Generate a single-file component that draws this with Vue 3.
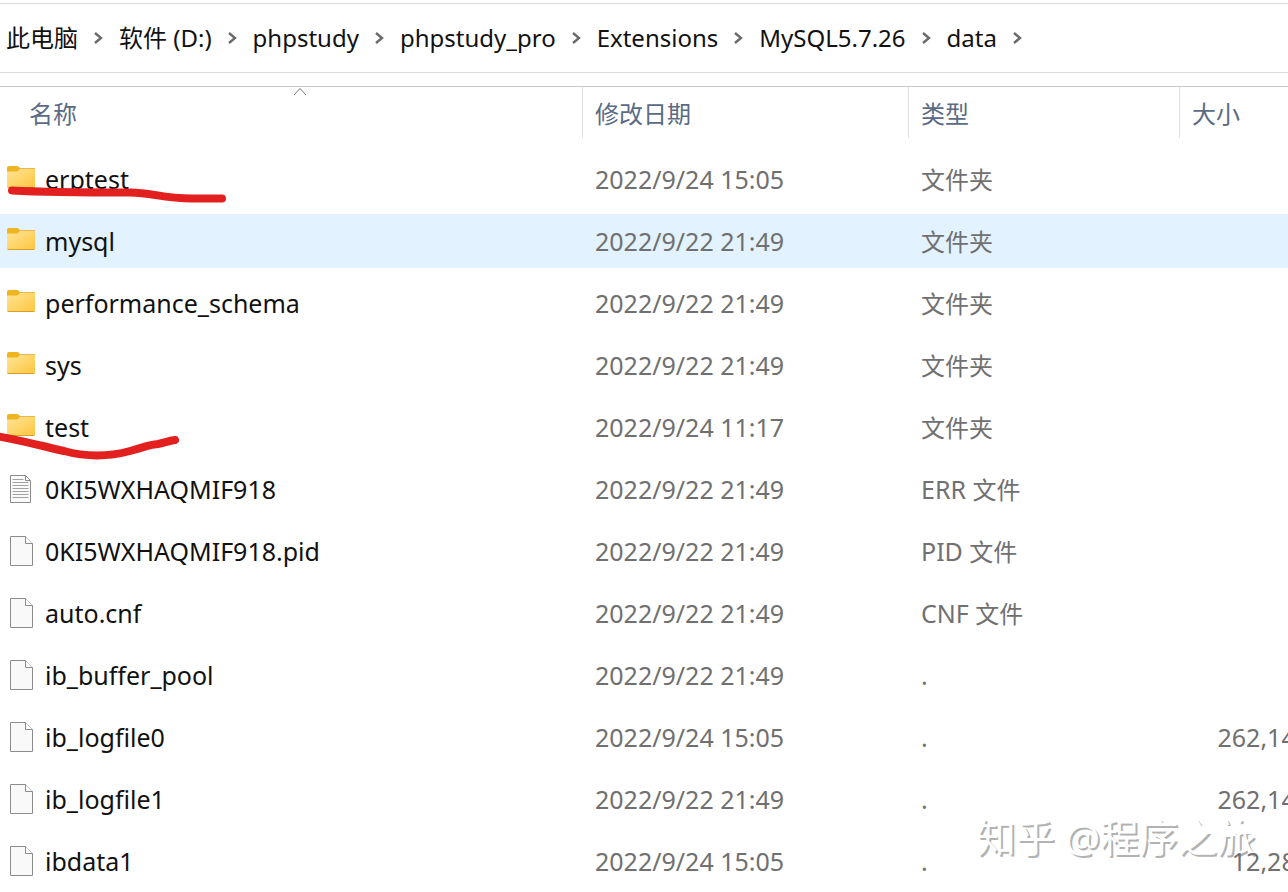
<template>
  <div class="explorer">
    <nav class="address" aria-label="路径">
      <template v-for="part in path" :key="part">
        <a href="#" @click.prevent>{{ part }}</a>
        <svg class="chevron" viewBox="0 0 11 14" aria-hidden="true">
          <path d="M2 2l6 5-6 5" />
        </svg>
      </template>
    </nav>

    <div class="list">
      <table>
        <colgroup>
          <col />
          <col class="col-date" />
          <col class="col-type" />
          <col class="col-size" />
        </colgroup>
        <thead>
          <tr>
            <th class="th-name">
              <svg class="sort" viewBox="0 0 14 9" aria-hidden="true">
                <path d="M1 8 7 1.5 13 8" />
              </svg>
              <button type="button">名称</button>
            </th>
            <th><button type="button">修改日期</button></th>
            <th><button type="button">类型</button></th>
            <th><button type="button">大小</button></th>
          </tr>
        </thead>
        <tbody>
          <tr v-for="file in files" :key="file.name" :class="{ hover: file.name === active }">
            <td class="name">
              <div class="name-cell">
                <svg v-if="file.icon === 'folder'" class="icon" viewBox="0 0 30 34">
                  <defs>
                    <linearGradient id="folder" x1="0" y1="0" x2="1" y2="1">
                      <stop offset="0" stop-color="#ffe598" />
                      <stop offset="1" stop-color="#fcc63f" />
                    </linearGradient>
                  </defs>
                  <path d="M1 6q0-2 2-2h8q1 0 2 1l2 2-3 6H1z" fill="#efb521" />
                  <path d="M1 9.500h9.500q1.500 0 2.500-1.500l1.500-1.500H29V24.500q0 1-1 1H2q-1 0-1-1z" fill="url(#folder)" />
                  <path d="M14 6.500h15" stroke="#e8b84a" />
                  <path d="M1.500 25.500h27" stroke="#d9a028" />
                </svg>
                <svg v-else-if="file.icon === 'text'" class="icon" viewBox="0 0 30 34">
                  <path d="M4.500 3.500h15l5 5v22h-20z" fill="#fafafa" stroke="#8c8c8c" />
                  <path d="M19.500 3.500v5h5" fill="none" stroke="#8c8c8c" />
                  <path d="M6.500 7.500h11M6.500 10.500h16M6.500 13.500h16M6.500 16.500h16M6.500 19.500h16M6.500 22.500h16M6.500 25.500h16" stroke="#a2a2a2" />
                </svg>
                <svg v-else class="icon" viewBox="0 0 30 34">
                  <path d="M4.500 2.500h15l7 7v22h-22z" fill="#f9f9f9" stroke="#8c8c8c" />
                  <path d="M19.500 2.500v7h7" fill="#fff" stroke="#8c8c8c" />
                </svg>
                <span>{{ file.name }}</span>
              </div>
            </td>
            <td>{{ file.date }}</td>
            <td>{{ file.type[0] }}<span class="cjk">{{ file.type[1] }}</span></td>
            <td class="size">{{ file.size }}</td>
          </tr>
        </tbody>
      </table>
    </div>

    <svg class="marks" viewBox="0 0 240 300" aria-hidden="true">
      <path d="M12 30.500C40 32 80 32.500 130 32.500c22 0 32 6 62 6h30" />
      <path d="M-4 276C20 280 42 286 64 291c22 6 44 6 66 0 22-6 18-6 28-7 6-1 10-3 17-4" />
    </svg>
    <div class="watermark">知乎 @程序之旅</div>
  </div>
</template>

<script setup>
const path = ['此电脑', '软件 (D:)', 'phpstudy', 'phpstudy_pro', 'Extensions', 'MySQL5.7.26', 'data']

const active = 'mysql'

const files = [
  { name: 'erptest', icon: 'folder', date: '2022/9/24 15:05', type: ['', '文件夹'] },
  { name: 'mysql', icon: 'folder', date: '2022/9/22 21:49', type: ['', '文件夹'] },
  { name: 'performance_schema', icon: 'folder', date: '2022/9/22 21:49', type: ['', '文件夹'] },
  { name: 'sys', icon: 'folder', date: '2022/9/22 21:49', type: ['', '文件夹'] },
  { name: 'test', icon: 'folder', date: '2022/9/24 11:17', type: ['', '文件夹'] },
  { name: '0KI5WXHAQMIF918', icon: 'text', date: '2022/9/22 21:49', type: ['ERR ', '文件'] },
  { name: '0KI5WXHAQMIF918.pid', icon: 'file', date: '2022/9/22 21:49', type: ['PID ', '文件'] },
  { name: 'auto.cnf', icon: 'file', date: '2022/9/22 21:49', type: ['CNF ', '文件'] },
  { name: 'ib_buffer_pool', icon: 'file', date: '2022/9/22 21:49', type: ['.', ''] },
  { name: 'ib_logfile0', icon: 'file', date: '2022/9/24 15:05', type: ['.', ''], size: '262,144' },
  { name: 'ib_logfile1', icon: 'file', date: '2022/9/22 21:49', type: ['.', ''], size: '262,144' },
  { name: 'ibdata1', icon: 'file', date: '2022/9/24 15:05', type: ['.', ''], size: '12,288' }
]
</script>

<style>
body {
  margin: 0;
  background: #fff;
}
</style>

<style scoped>
.explorer {
  position: relative;
  height: 100vh;
  padding-top: 3px;
  box-sizing: border-box;
  overflow: hidden;
  font-family: 'Noto Sans', 'Noto Sans CJK SC', sans-serif;
  font-size: 25px;
  line-height: 32px;
  color: #111;
}

.address {
  display: flex;
  align-items: center;
  gap: 15px;
  height: 68px;
  padding-left: 6px;
  border-top: 1px solid #dcdcdc;
  border-bottom: 1px solid #dcdcdc;
  font-size: 24px;
  white-space: nowrap;
}

.address a {
  color: inherit;
  text-decoration: none;
}

.chevron {
  width: 11px;
  height: 14px;
  flex-shrink: 0;
  fill: none;
  stroke: #6a6a6a;
  stroke-width: 2.4;
}

.list {
  margin-top: 13px;
  border-top: 1px solid #c8c8c8;
}

table {
  width: calc(100% + 45px);
  table-layout: fixed;
  border-spacing: 0;
}

.col-date {
  width: 326px;
}

.col-type {
  width: 271px;
}

.col-size {
  width: 153px;
}

th {
  position: relative;
  height: 51px;
  padding: 2px 0 0 12px;
  border-right: 1px solid #e2e2e2;
  box-sizing: border-box;
  text-align: left;
}

.th-name {
  padding-left: 29px;
}

th button {
  padding: 0;
  border: 0;
  background: none;
  font: inherit;
  font-weight: 400;
  font-size: 24px;
  color: #596b85;
}

.sort {
  position: absolute;
  top: 0;
  left: calc(50% + 2px);
  width: 14px;
  height: 9px;
  fill: none;
  stroke: #777;
}

tbody::before {
  content: '';
  display: block;
  height: 10px;
}

td {
  height: 54px;
  padding: 0 0 0 12px;
  border-top: 4px solid #fff;
  border-bottom: 4px solid #fff;
  color: #707070;
  white-space: nowrap;
}

.hover td {
  background: #e3f2ff;
}

td.name {
  padding-left: 6px;
  color: #111;
}

.name-cell {
  display: flex;
  align-items: center;
  gap: 9px;
}

.icon {
  width: 30px;
  height: 34px;
  flex-shrink: 0;
}

.cjk {
  font-size: 24px;
}

/* sizes stay readable above the watermark */
td.size {
  position: relative;
  z-index: 1;
  padding-right: 23px;
  text-align: right;
}

.marks {
  position: absolute;
  top: 160px;
  left: 0;
  width: 240px;
  height: 300px;
  fill: none;
  stroke: #e32020;
  stroke-width: 8;
  stroke-linecap: round;
  stroke-linejoin: round;
  pointer-events: none;
}

.watermark {
  position: absolute;
  right: 32px;
  bottom: 31px;
  font-size: 39px;
  line-height: 48px;
  color: #fff;
  text-shadow: 2px 2px 0 #b2b2b2;
  pointer-events: none;
}
</style>
